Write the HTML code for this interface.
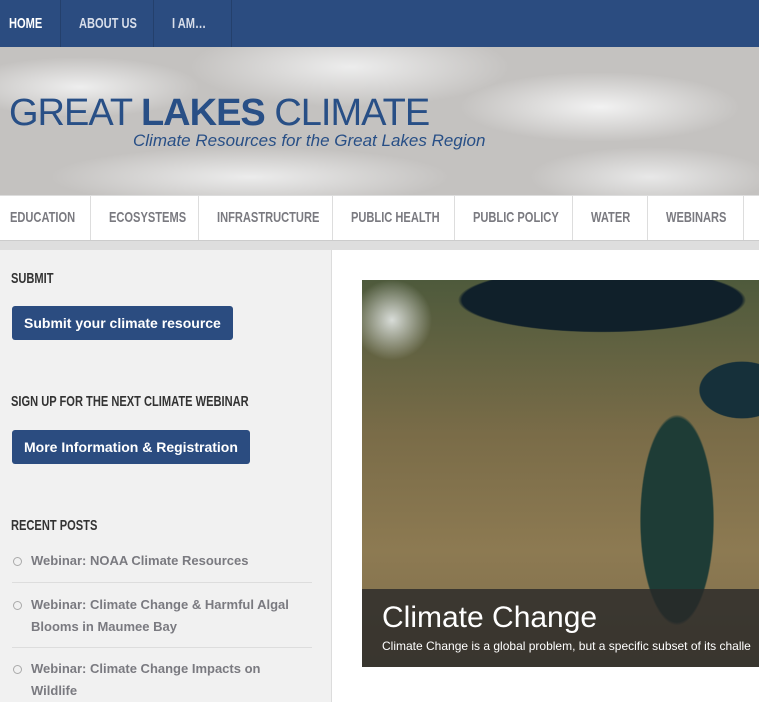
<!DOCTYPE html>
<html><head><meta charset="utf-8"><style>
*{margin:0;padding:0;box-sizing:border-box}
body{width:759px;height:702px;overflow:hidden;font-family:"Liberation Sans",sans-serif;background:#fff;position:relative}
.cond{font-weight:bold;white-space:nowrap}
.cond span{display:inline-block;transform:scaleX(.74);transform-origin:left center}
#top{position:absolute;left:0;top:0;width:759px;height:47px;background:#2b4c80}
#top div{position:absolute;top:0;height:47px;line-height:47px;color:#d8deea;font-size:15px;border-right:1px solid #24406c}
#hdr{position:absolute;left:0;top:47px;width:759px;height:148px;background:
radial-gradient(ellipse 120px 30px at 80px 40px,#eee,transparent),
radial-gradient(ellipse 160px 40px at 350px 20px,#ededed,transparent),
radial-gradient(ellipse 140px 35px at 600px 60px,#f2f2f2,transparent),
radial-gradient(ellipse 200px 30px at 250px 130px,#ececec,transparent),
radial-gradient(ellipse 120px 30px at 650px 130px,#e8e8e8,transparent),
#c4c2c0}
#logo{position:absolute;left:9px;top:93px;font-size:38px;color:#284f86;letter-spacing:-1px;line-height:40px;white-space:nowrap}
#tag{position:absolute;left:133px;top:131px;font-size:17px;font-style:italic;color:#284f86;white-space:nowrap}
#nav{position:absolute;left:0;top:195px;width:759px;height:46px;background:#fff;border-top:1px solid #ddd;border-bottom:1px solid #ccc}
#nav div{position:absolute;top:0;height:44px;line-height:44px;color:#7a7a80;font-size:15px;border-right:1px solid #ddd}
#bar{position:absolute;left:0;top:241px;width:759px;height:9px;background:#dedede}
#side{position:absolute;left:0;top:250px;width:332px;height:452px;background:#f1f1f1;border-right:1px solid #dcdcdc}
h3{position:absolute;left:11px;font-size:15px;color:#333}
.btn{position:absolute;left:12px;height:34px;line-height:34px;background:#2b4c80;color:#fff;font-weight:bold;font-size:14px;padding:0 12px;border-radius:3px}
.post{position:absolute;left:12px;width:300px;color:#7a7a80;font-weight:bold;font-size:13px;line-height:22px;padding-left:19px}
.post:before{content:"";position:absolute;left:1px;top:7px;width:7px;height:7px;border:1px solid #aaa;border-radius:50%}
.sep{position:absolute;left:12px;width:300px;height:1px;background:#ddd}
#img{position:absolute;left:362px;top:280px;width:397px;height:387px;background:
radial-gradient(ellipse 60px 170px at 315px 240px,#1e3c36 60%,transparent 62%),
radial-gradient(ellipse 200px 45px at 240px 20px,#10202a 70%,transparent 72%),
radial-gradient(ellipse 60px 40px at 380px 110px,#16303a 70%,transparent 72%),
radial-gradient(ellipse 40px 40px at 30px 40px,#d8dcd8,transparent),
linear-gradient(180deg,#4e5a3c 0%,#7a6c48 40%,#8d7a52 70%,#7e6d4c 100%)}
#cap{position:absolute;left:362px;top:589px;width:397px;height:78px;background:rgba(40,40,40,.8);color:#fff;overflow:hidden}
</style></head><body>
<div id="top">
<div class="cond" style="left:0;width:61px;padding-left:9px;color:#fff"><span>HOME</span></div>
<div class="cond" style="left:61px;width:93px;padding-left:18px"><span>ABOUT US</span></div>
<div class="cond" style="left:154px;width:78px;padding-left:18px"><span>I AM…</span></div>
</div>
<div id="hdr"></div>
<div id="logo">GREAT <b>LAKES</b> CLIMATE</div>
<div id="tag">Climate Resources for the Great Lakes Region</div>
<div id="nav">
<div class="cond" style="left:0;width:91px;padding-left:10px"><span>EDUCATION</span></div>
<div class="cond" style="left:91px;width:108px;padding-left:18px"><span>ECOSYSTEMS</span></div>
<div class="cond" style="left:199px;width:134px;padding-left:18px"><span>INFRASTRUCTURE</span></div>
<div class="cond" style="left:333px;width:122px;padding-left:18px"><span>PUBLIC HEALTH</span></div>
<div class="cond" style="left:455px;width:118px;padding-left:18px"><span>PUBLIC POLICY</span></div>
<div class="cond" style="left:573px;width:75px;padding-left:18px"><span>WATER</span></div>
<div class="cond" style="left:648px;width:96px;padding-left:18px"><span>WEBINARS</span></div>
</div>
<div id="bar"></div>
<div id="side"></div>
<h3 class="cond" style="top:270px"><span>SUBMIT</span></h3>
<div class="btn" style="top:306px">Submit your climate resource</div>
<h3 class="cond" style="top:393px"><span>SIGN UP FOR THE NEXT CLIMATE WEBINAR</span></h3>
<div class="btn" style="top:430px">More Information &amp; Registration</div>
<h3 class="cond" style="top:517px"><span>RECENT POSTS</span></h3>
<div class="post" style="top:550px">Webinar: NOAA Climate Resources</div>
<div class="sep" style="top:582px"></div>
<div class="post" style="top:594px">Webinar: Climate Change &amp; Harmful Algal<br>Blooms in Maumee Bay</div>
<div class="sep" style="top:647px"></div>
<div class="post" style="top:658px">Webinar: Climate Change Impacts on<br>Wildlife</div>
<div id="img"></div>
<div id="cap"><div style="position:absolute;left:20px;top:12px;font-size:30px;white-space:nowrap">Climate Change</div>
<div style="position:absolute;left:20px;top:50px;font-size:12px;white-space:nowrap">Climate Change is a global problem, but a specific subset of its challe</div></div>
</body></html>
